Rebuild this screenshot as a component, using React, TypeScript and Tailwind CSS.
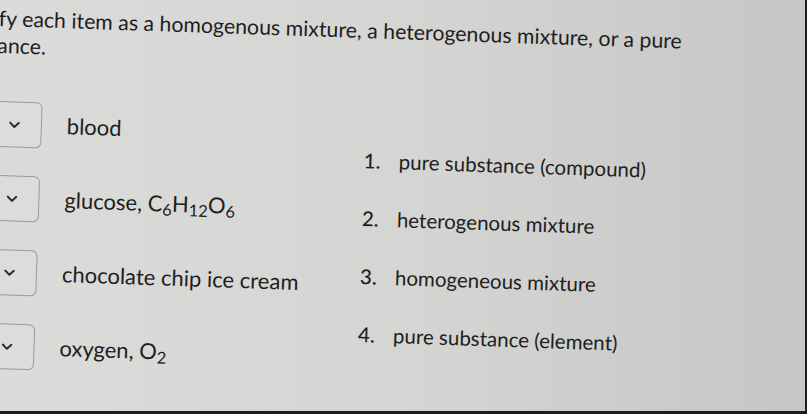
import React from "react";

function Chevron() {
  return (
    <svg width="11" height="7" viewBox="0 0 11 7" fill="none">
      <path d="M1.2 1.2 L5.5 5.4 L9.8 1.2" stroke="#2e2e2e" strokeWidth="2" strokeLinecap="round" strokeLinejoin="round" />
    </svg>
  );
}

const rows: React.ReactNode[] = [
  <>blood</>,
  <>
    glucose, C<sub>6</sub>H<sub>12</sub>O<sub>6</sub>
  </>,
  <>chocolate chip ice cream</>,
  <>
    oxygen, O<sub>2</sub>
  </>,
];

const options = [
  "pure substance (compound)",
  "heterogenous mixture",
  "homogeneous mixture",
  "pure substance (element)",
];

export default function App() {
  return (
    <div className="w-[807px] h-[414px] overflow-hidden flex flex-col bg-[#1c1c1c]">
      <div className="relative flex-1 overflow-hidden mr-[2px] bg-linear-to-r from-[#dbdbd9] via-[#d5d5d3] to-[#c6c6c4]">
        <div className="origin-top-left rotate-[1.9deg] font-[Lato,sans-serif] text-[#1e1e1e]">
          <div className="pt-[5px] ml-[-51px] text-[21.3px] leading-[27px] whitespace-nowrap">
            <div className="ml-[-3px]">Classify each item as a homogenous mixture, a heterogenous mixture, or a pure</div>
            <div>substance.</div>
          </div>
          <div className="flex mt-[42px]">
            <div className="flex flex-col gap-[28px] w-[369px] shrink-0">
              {rows.map((r, i) => (
                <div key={i} className="flex items-center h-[46px]">
                  <div className="ml-[-40px] w-[86px] h-[46px] shrink-0 border-[1.5px] border-[#9a9a9a] rounded-[6px] bg-[#dcdcda] flex items-center pl-[52px]">
                    <Chevron />
                  </div>
                  <span className="ml-[25px] text-[22px] leading-[24px] whitespace-nowrap">{r}</span>
                </div>
              ))}
            </div>
            <ol className="pt-[35px] flex flex-col gap-[34px]">
              {options.map((o, i) => (
                <li key={i} className="flex text-[20.5px] leading-[24px] whitespace-nowrap">
                  <span className="w-[35px] font-medium">{i + 1}.</span>
                  <span>{o}</span>
                </li>
              ))}
            </ol>
          </div>
        </div>
      </div>
      <div className="h-[3px] shrink-0" />
    </div>
  );
}
